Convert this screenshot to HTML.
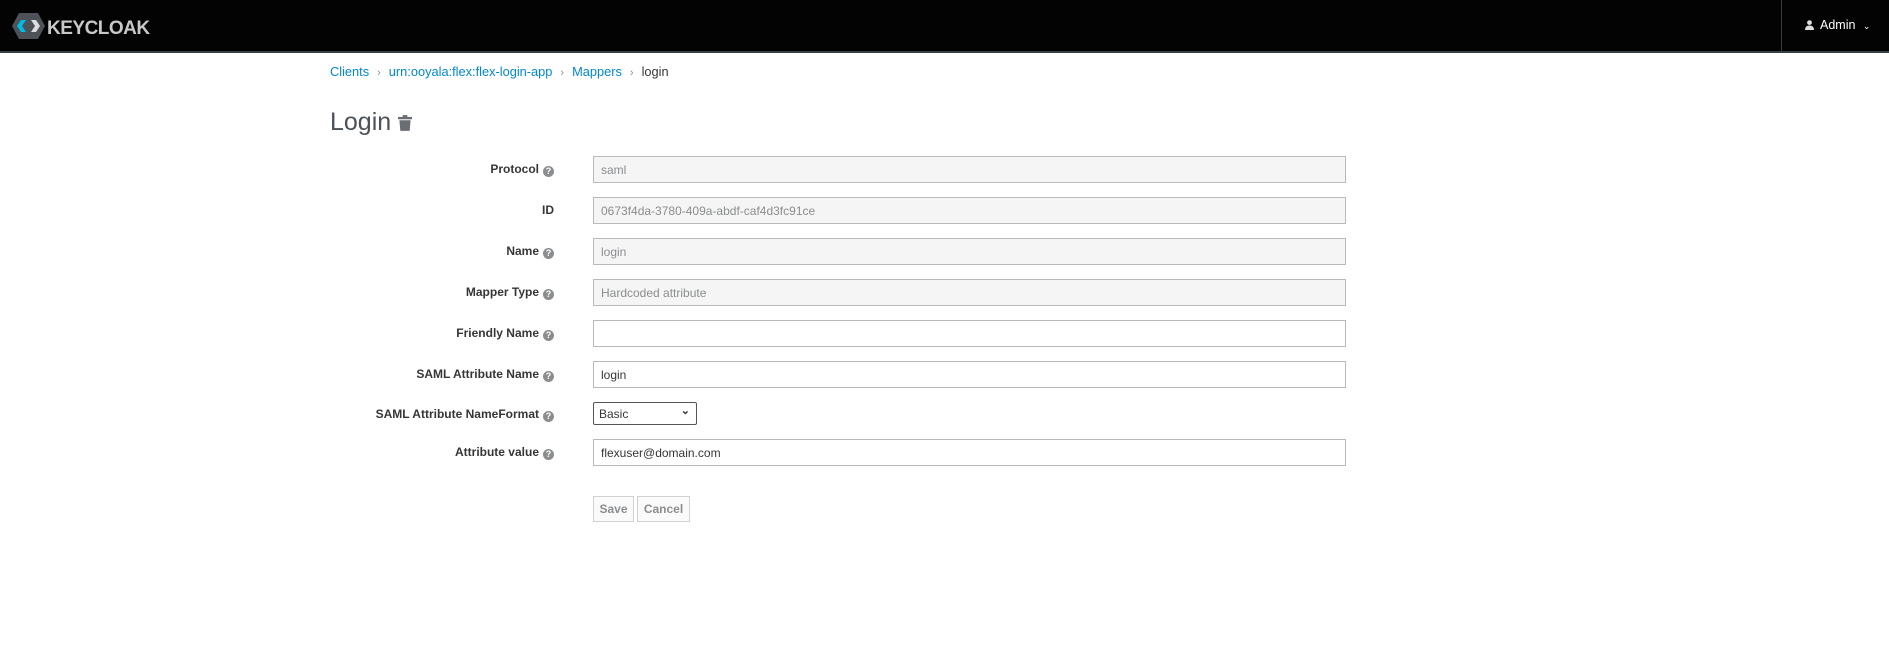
<!DOCTYPE html>
<html><head><meta charset="utf-8"><style>
*{box-sizing:border-box}
body{margin:0;width:1889px;height:664px;background:#fff;font-family:"Liberation Sans",sans-serif;font-size:14px;color:#363636;position:relative;overflow:hidden}
.hdr{position:absolute;left:0;top:0;width:1889px;height:53px;background:#030303;border-bottom:2px solid #393f44}
.div{position:absolute;left:1781px;top:0;width:1px;height:53px;background:#3a3a3a}
.admin{position:absolute;left:1805px;top:18px;color:#fff;font-size:12.5px}
.bc{position:absolute;left:330px;top:64px;font-size:12.8px;color:#0088ce}
.bc span.s{color:#8b8d8f;margin:0 8px;font-size:11px}
.bc span.c{color:#363636}
h1{position:absolute;left:330px;top:108px;margin:0;font-weight:300;font-size:25px;color:#4d5258}
.row{position:absolute;left:0;width:1889px;height:27px}
.lbl{position:absolute;right:1335px;top:6px;font-weight:bold;font-size:12px;white-space:nowrap;color:#363636}
.q{display:inline-block;width:11px;height:11px;border-radius:50%;background:#8b8d8f;color:#fff;font-size:9px;text-align:center;line-height:11px;margin-left:4px;vertical-align:-1px}
.inp{position:absolute;left:593px;top:0;width:753px;height:27px;border:1px solid #bababa;padding:6px 7px;font-size:12px;color:#363636}
.ro{background:#f5f5f5;color:#8b8d8f}
.sel{position:absolute;left:593px;top:1px;width:104px;height:23px;border:1px solid #555;border-radius:2px;padding:4px 5px;font-size:12px;background:#fff}
.btn{position:absolute;top:496px;height:26px;border:1px solid #d1d1d1;background:#fafafa;color:#8b8d8f;font-weight:bold;font-size:12px;text-align:center;line-height:24px}
</style></head><body>
<div class="hdr">
<svg style="position:absolute;left:12px;top:12px" width="150" height="30" viewBox="0 0 150 30">
<polygon points="7,1 26,1 33,14 26,27 7,27 0,14" fill="#4d5258"/>
<polygon points="9,8 14,8 10,14 14,20 9,20 5,14" fill="#00b9e4"/>
<polygon points="24,8 19,8 23,14 19,20 24,20 28,14" fill="#ddd"/>
<text x="35" y="22" font-family="Liberation Sans" font-weight="bold" font-size="19" fill="#c8c8c8" letter-spacing="-0.5">KEYCLOAK</text>
</svg>
<div class="div"></div>
<div class="admin"><svg width="9" height="10" viewBox="0 0 9 10" style="vertical-align:-1px;margin-right:6px"><circle cx="4.5" cy="2.6" r="2.4" fill="#ddd"/><path d="M0 10 Q0 5.5 4.5 5.5 Q9 5.5 9 10Z" fill="#ddd"/></svg>Admin <span style="font-size:9px;margin-left:4px">&#8964;</span></div>
</div>
<div class="bc">Clients<span class="s">›</span>urn:ooyala:flex:flex-login-app<span class="s">›</span>Mappers<span class="s">›</span><span class="c">login</span></div>
<h1>Login <svg width="14" height="16" viewBox="0 0 15 17" style="vertical-align:-1px"><rect x="0" y="2" width="15" height="2.5" fill="#6a6e73"/><rect x="5" y="0" width="5" height="2" fill="#6a6e73"/><path d="M1.5 5.5 H13.5 L12.5 17 H2.5Z" fill="#6a6e73"/></svg></h1>

<div class="row" style="top:156px"><div class="lbl">Protocol<span class="q">?</span></div><div class="inp ro">saml</div></div>
<div class="row" style="top:197px"><div class="lbl">ID</div><div class="inp ro">0673f4da-3780-409a-abdf-caf4d3fc91ce</div></div>
<div class="row" style="top:238px"><div class="lbl">Name<span class="q">?</span></div><div class="inp ro">login</div></div>
<div class="row" style="top:279px"><div class="lbl">Mapper Type<span class="q">?</span></div><div class="inp ro">Hardcoded attribute</div></div>
<div class="row" style="top:320px"><div class="lbl">Friendly Name<span class="q">?</span></div><div class="inp"></div></div>
<div class="row" style="top:361px"><div class="lbl">SAML Attribute Name<span class="q">?</span></div><div class="inp">login</div></div>
<div class="row" style="top:401px"><div class="lbl">SAML Attribute NameFormat<span class="q">?</span></div><div class="sel">Basic<span style="position:absolute;right:6px;top:1px;font-weight:bold;font-size:11px">&#8964;</span></div></div>
<div class="row" style="top:439px"><div class="lbl">Attribute value<span class="q">?</span></div><div class="inp">flexuser@domain.com</div></div>

<div class="btn" style="left:593px;width:41px">Save</div>
<div class="btn" style="left:637px;width:53px">Cancel</div>
</body></html>
